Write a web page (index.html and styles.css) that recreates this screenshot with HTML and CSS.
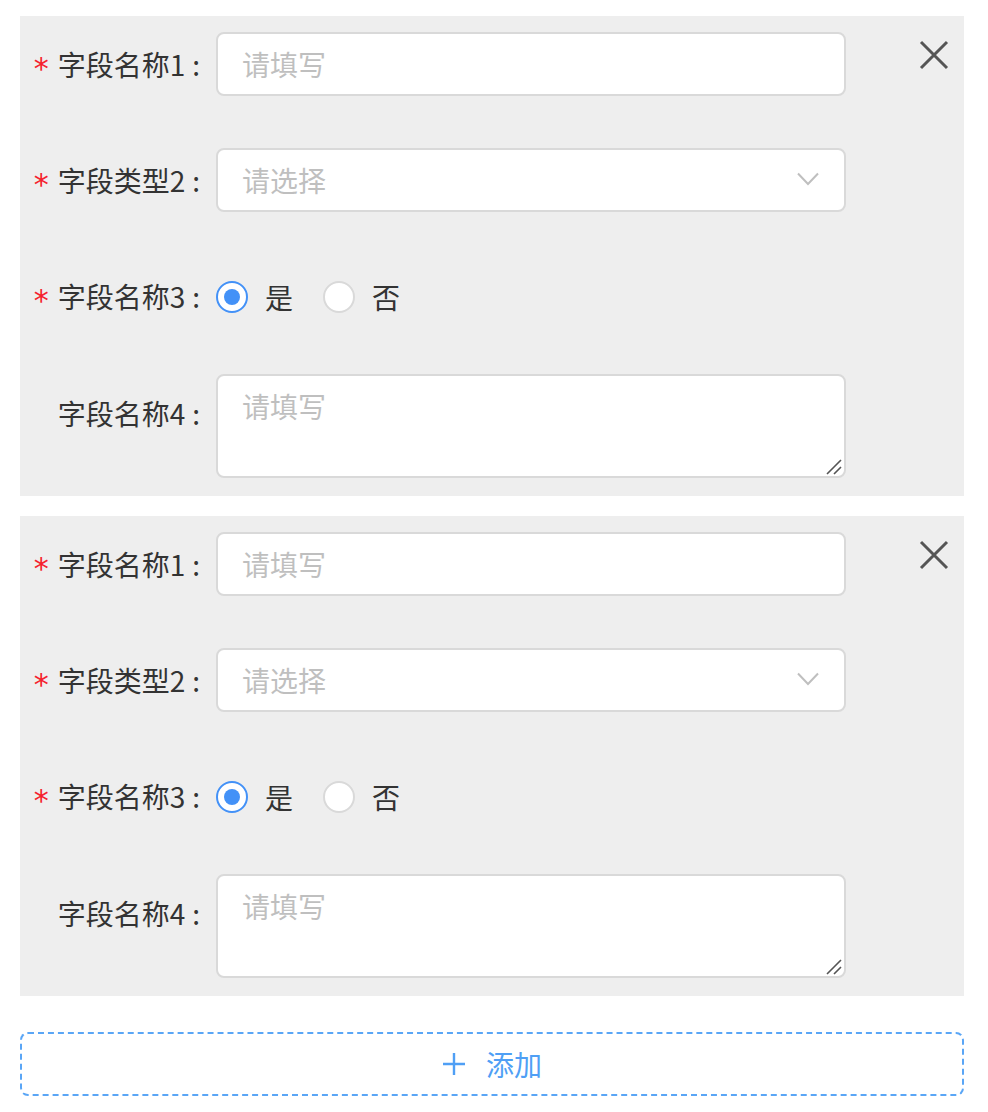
FILE: index.html
```html
<!DOCTYPE html>
<html lang="zh-CN">
<head>
<meta charset="utf-8">
<title>表单</title>
<link rel="stylesheet" href="styles.css">
</head>
<body>
<div class="page">
  <div class="card">
    <button class="close" type="button" aria-label="删除">
      <svg width="30" height="30" viewBox="0 0 30 30"><path d="M2 2 L28 28 M28 2 L2 28" stroke="#555" stroke-width="3" fill="none"/></svg>
    </button>
    <div class="item">
      <label class="label required">字段名称1<span class="colon">:</span></label>
      <div class="control"><input class="input" placeholder="请填写"></div>
    </div>
    <div class="item">
      <label class="label required">字段类型2<span class="colon">:</span></label>
      <div class="control">
        <div class="select"><span class="ph">请选择</span>
          <svg class="arrow" width="22" height="14" viewBox="0 0 22 14"><path d="M1 1.5 L11 12 L21 1.5" stroke="#bfbfbf" stroke-width="2" fill="none"/></svg>
        </div>
      </div>
    </div>
    <div class="item item-radio">
      <label class="label required">字段名称3<span class="colon">:</span></label>
      <div class="control radios">
        <span class="radio-opt"><span class="radio checked"></span><span class="rtext">是</span></span>
        <span class="radio-opt"><span class="radio"></span><span class="rtext">否</span></span>
      </div>
    </div>
    <div class="item item-text">
      <label class="label">字段名称4<span class="colon">:</span></label>
      <div class="control text-wrap">
        <textarea class="textarea" placeholder="请填写"></textarea>
        <svg class="grip" width="16" height="16" viewBox="0 0 16 16"><path d="M1 15 L15 1 M8 15 L15 8" stroke="#555" stroke-width="1.6" fill="none"/></svg>
      </div>
    </div>
  </div>

  <div class="card">
    <button class="close" type="button" aria-label="删除">
      <svg width="30" height="30" viewBox="0 0 30 30"><path d="M2 2 L28 28 M28 2 L2 28" stroke="#555" stroke-width="3" fill="none"/></svg>
    </button>
    <div class="item">
      <label class="label required">字段名称1<span class="colon">:</span></label>
      <div class="control"><input class="input" placeholder="请填写"></div>
    </div>
    <div class="item">
      <label class="label required">字段类型2<span class="colon">:</span></label>
      <div class="control">
        <div class="select"><span class="ph">请选择</span>
          <svg class="arrow" width="22" height="14" viewBox="0 0 22 14"><path d="M1 1.5 L11 12 L21 1.5" stroke="#bfbfbf" stroke-width="2" fill="none"/></svg>
        </div>
      </div>
    </div>
    <div class="item item-radio">
      <label class="label required">字段名称3<span class="colon">:</span></label>
      <div class="control radios">
        <span class="radio-opt"><span class="radio checked"></span><span class="rtext">是</span></span>
        <span class="radio-opt"><span class="radio"></span><span class="rtext">否</span></span>
      </div>
    </div>
    <div class="item item-text">
      <label class="label">字段名称4<span class="colon">:</span></label>
      <div class="control text-wrap">
        <textarea class="textarea" placeholder="请填写"></textarea>
        <svg class="grip" width="16" height="16" viewBox="0 0 16 16"><path d="M1 15 L15 1 M8 15 L15 8" stroke="#555" stroke-width="1.6" fill="none"/></svg>
      </div>
    </div>
  </div>

  <button class="add" type="button">
    <svg width="24" height="24" viewBox="0 0 24 24"><path d="M12 1 V23 M1 12 H23" stroke="#4f9ff5" stroke-width="2.4" fill="none"/></svg>
    <span>添加</span>
  </button>
</div>
</body>
</html>
```

FILE: styles.css
```css
* { box-sizing: border-box; }
html, body { margin: 0; padding: 0; background: #fff; }
body {
  font-family: "Noto Sans CJK SC", "Noto Sans", sans-serif;
  font-size: 28px;
  color: #333;
}
.page {
  padding: 16px 24px 16px 20px;
  display: flex;
  flex-direction: column;
}
.card {
  position: relative;
  background: #eeeeee;
  padding: 16px 0 18px 0;
  margin-bottom: 20px;
}
.card + .card { margin-bottom: 36px; }
.close {
  position: absolute;
  top: 24px;
  right: 15px;
  width: 30px;
  height: 30px;
  padding: 0;
  border: 0;
  background: transparent;
  cursor: pointer;
}
.close svg { display: block; }
.item {
  display: flex;
  align-items: flex-start;
  margin-bottom: 52px;
}
.item-radio { margin-bottom: 44px; }
.item-text { margin-bottom: 0; }
.label {
  width: 196px;
  flex: none;
  height: 64px;
  line-height: 64px;
  text-align: right;
  padding-right: 16px;
  color: #333;
  white-space: nowrap;
}
.colon { margin-left: 7px; }
.label.required::before {
  content: "*";
  color: #f5222d;
  margin-right: 9px;
  font-family: "DejaVu Sans", sans-serif;
  font-size: 30px;
  position: relative;
  top: 3px;
}
.item-text .label { margin-top: 7px; }
.control { width: 630px; flex: none; }
.input {
  display: block;
  width: 100%;
  height: 64px;
  border: 2px solid #d9d9d9;
  border-radius: 8px;
  background: #fff;
  padding: 0 24px;
  font: inherit;
  font-size: 28px;
  color: #333;
  outline: none;
}
.input::placeholder, .textarea::placeholder { color: #bfbfbf; }
.select {
  height: 64px;
  border: 2px solid #d9d9d9;
  border-radius: 8px;
  background: #fff;
  padding: 0 25px 0 24px;
  display: flex;
  align-items: center;
  justify-content: space-between;
}
.ph { color: #bfbfbf; }
.arrow { display: block; margin-top: -2px; }
.radios {
  height: 66px;
  display: flex;
  align-items: center;
}
.radio-opt {
  display: inline-flex;
  align-items: center;
  margin-right: 30px;
}
.radio {
  width: 32px;
  height: 32px;
  border-radius: 50%;
  border: 2px solid #d9d9d9;
  background: #fff;
  display: inline-flex;
  align-items: center;
  justify-content: center;
  margin-right: 17px;
}
.radio.checked { border-color: #4391f7; }
.radio.checked::after {
  content: "";
  width: 16px;
  height: 16px;
  border-radius: 50%;
  background: #4391f7;
}
.rtext { color: #333; line-height: 40px; }
.text-wrap { position: relative; }
.textarea {
  display: block;
  width: 100%;
  height: 104px;
  border: 2px solid #d9d9d9;
  border-radius: 8px;
  background: #fff;
  padding: 10px 24px;
  font: inherit;
  font-size: 28px;
  line-height: 40px;
  color: #333;
  outline: none;
  resize: none;
}
.grip {
  position: absolute;
  right: 4px;
  bottom: 3px;
  display: block;
}
.add {
  height: 64px;
  width: 100%;
  border: 2px dashed #5aa6f6;
  border-radius: 8px;
  background: #fff;
  color: #4f9ff5;
  font: inherit;
  font-size: 28px;
  display: flex;
  align-items: center;
  justify-content: center;
  gap: 20px;
  cursor: pointer;
}
.add svg { display: block; }
```
